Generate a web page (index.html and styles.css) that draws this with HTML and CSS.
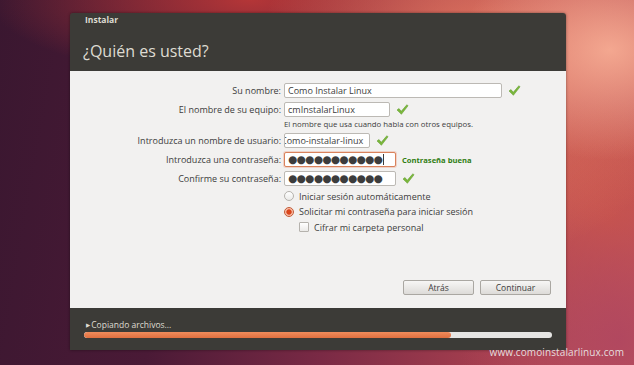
FILE: index.html
```html
<!DOCTYPE html>
<html lang="es">
<head>
    <meta charset="UTF-8" />
    <title>Instalar</title>
    <link rel="stylesheet" href="styles.css">
</head>
<body>
<div class="desktop">
    <div class="window">
        <div class="header">
            <div class="wtitle">Instalar</div>
            <h1>¿Quién es usted?</h1>
        </div>

        <div class="content">
            <div class="row">
                <label class="label">Su nombre:</label>
                <div class="field w-name">Como Instalar Linux</div>
                <svg class="ok" viewBox="0 0 14 12"><path d="M1 6.5 L3.2 5 L5.6 8 L11.8 0.8 L13 2 L5.8 11.2 Z" fill="#7cb83c" stroke="#5e9a2a" stroke-width="0.6"/></svg>
            </div>
            <div class="row tight">
                <label class="label">El nombre de su equipo:</label>
                <div class="field w-host">cmInstalarLinux</div>
                <svg class="ok" viewBox="0 0 14 12"><path d="M1 6.5 L3.2 5 L5.6 8 L11.8 0.8 L13 2 L5.8 11.2 Z" fill="#7cb83c" stroke="#5e9a2a" stroke-width="0.6"/></svg>
            </div>
            <div class="hint">El nombre que usa cuando habla con otros equipos.</div>
            <div class="row">
                <label class="label">Introduzca un nombre de usuario:</label>
                <div class="field w-user"><span class="scrolled">Como-instalar-linux</span></div>
                <svg class="ok" viewBox="0 0 14 12"><path d="M1 6.5 L3.2 5 L5.6 8 L11.8 0.8 L13 2 L5.8 11.2 Z" fill="#7cb83c" stroke="#5e9a2a" stroke-width="0.6"/></svg>
            </div>
            <div class="row">
                <label class="label">Introduzca una contraseña:</label>
                <div class="field w-pass focus"><span class="dots">●●●●●●●●●●●</span><span class="caret"></span></div>
                <span class="strength">Contraseña buena</span>
            </div>
            <div class="row">
                <label class="label">Confirme su contraseña:</label>
                <div class="field w-pass"><span class="dots">●●●●●●●●●●●</span></div>
                <svg class="ok" viewBox="0 0 14 12"><path d="M1 6.5 L3.2 5 L5.6 8 L11.8 0.8 L13 2 L5.8 11.2 Z" fill="#7cb83c" stroke="#5e9a2a" stroke-width="0.6"/></svg>
            </div>

            <div class="options">
                <div class="opt"><span class="radio"></span>Iniciar sesión automáticamente</div>
                <div class="opt"><span class="radio on"></span>Solicitar mi contraseña para iniciar sesión</div>
                <div class="opt sub"><span class="check"></span>Cifrar mi carpeta personal</div>
            </div>

            <div class="buttons">
                <button type="button">Atrás</button>
                <button type="button">Continuar</button>
            </div>
        </div>

        <div class="footer">
            <div class="status"><span class="arrow">▶</span>Copiando archivos...</div>
            <div class="progress"><div class="bar" style="width: 78.5%"></div></div>
        </div>
    </div>
    <div class="watermark">www.comoinstalarlinux.com</div>
</div>
</body>
</html>
```

FILE: styles.css
```css
body {
    margin: 0;
    font-family: 'Open Sans', 'DejaVu Sans', sans-serif;
}
.desktop {
    position: relative;
    width: 634px;
    height: 365px;
    overflow: hidden;
    box-sizing: border-box;
    padding: 13px 0 0 70px;
    background:
        radial-gradient(ellipse 150px 110px at 610px 50px, rgba(248,175,150,0.9), rgba(248,175,150,0) 100%),
        radial-gradient(ellipse 220px 200px at 480px 60px, rgba(240,130,100,0.9), rgba(240,130,100,0) 100%),
        radial-gradient(ellipse 160px 200px at 620px 340px, rgba(176,70,96,0.9), rgba(176,70,96,0) 100%),
        radial-gradient(ellipse 140px 120px at 610px 220px, rgba(210,90,70,0.95), rgba(210,90,70,0) 100%),
        radial-gradient(ellipse 260px 80px at 250px 0px, rgba(185,55,55,0.95), rgba(185,55,55,0) 100%),
        linear-gradient(100deg, #3a1730 0%, #4a1a36 30%, #7a2a45 55%, #a8404f 80%, #c25a5a 100%);
}
.window {
    width: 496px;
    height: 337px;
    display: flex;
    flex-direction: column;
    border-radius: 3px 3px 0 0;
    overflow: hidden;
    box-shadow: 0 0 3px rgba(0,0,0,0.45);
}
.header {
    background: #3c3b37;
    height: 58px;
    color: #dfdbd2;
    padding: 0 0 0 15px;
}
.wtitle {
    font-size: 8.5px;
    font-weight: bold;
    padding-top: 2px;
    line-height: 10px;
}
h1 {
    margin: 0;
    font-weight: normal;
    font-size: 16px;
    line-height: 20px;
    padding-top: 16px;
    margin-left: -2px;
}
.content {
    background: #f2f1f0;
    height: 237px;
    box-sizing: border-box;
    padding-top: 12px;
    display: flex;
    flex-direction: column;
    font-size: 9px;
    color: #3c3c3c;
}
.row {
    display: flex;
    align-items: center;
    height: 15px;
    margin-bottom: 4px;
}
.row.tight {
    margin-bottom: 2px;
}
.label {
    width: 211px;
    text-align: right;
    margin-right: 3px;
    white-space: nowrap;
}
.field {
    height: 15px;
    box-sizing: border-box;
    border: 1px solid #bcb9b4;
    border-radius: 2px;
    background: #fff;
    padding: 0 3px;
    line-height: 13px;
    white-space: nowrap;
    overflow: hidden;
    display: flex;
    align-items: center;
}
.w-name { width: 218px; }
.w-host { width: 106px; }
.w-user { width: 86px; padding: 0 2px; }
.w-pass { width: 112px; }
.focus {
    border-color: #d9825b;
    box-shadow: 0 0 0 1px rgba(233,120,80,0.25);
}
.scrolled {
    margin-left: -6px;
}
.dots {
    font-family: 'DejaVu Sans', sans-serif;
    font-size: 10.5px;
    letter-spacing: -0.6px;
    color: #3c3c3c;
}
.caret {
    display: inline-block;
    width: 1px;
    height: 11px;
    background: #3c3c3c;
    margin-left: 1px;
}
.ok {
    width: 13px;
    height: 11px;
    margin-left: 6px;
}
.strength {
    margin-left: 6px;
    color: #2f7d12;
    font-weight: bold;
    font-size: 7.6px;
}
.hint {
    font-size: 7.8px;
    line-height: 10px;
    margin: 0 0 4px 214px;
}
.options {
    padding: 0 0 0 214px;
}
.opt {
    display: flex;
    align-items: center;
    height: 12px;
    margin-bottom: 3.5px;
}
.opt.sub {
    padding-left: 15px;
}
.radio, .check {
    width: 10px;
    height: 10px;
    box-sizing: border-box;
    border: 1px solid #b5b2ad;
    background: linear-gradient(#fff, #ebeae8);
    margin-right: 5px;
    flex-shrink: 0;
}
.radio {
    border-radius: 50%;
}
.radio.on {
    border-color: #c25a35;
    background: radial-gradient(circle, #d9461c 0, #d9461c 2.3px, #f6b29a 3px, #fbe3d8 100%);
}
.check {
    border-radius: 1px;
}
.buttons {
    margin-top: auto;
    display: flex;
    justify-content: flex-end;
    gap: 6px;
    padding: 0 15px 13px 0;
}
button {
    width: 71px;
    height: 15px;
    padding: 0;
    border: 1px solid #aaa7a2;
    border-radius: 2px;
    background: linear-gradient(#f7f6f5, #dddbd8);
    font-family: 'Open Sans', 'DejaVu Sans', sans-serif;
    font-size: 8.5px;
    color: #3c3c3c;
}
.footer {
    flex: 1;
    background: #3c3b37;
    padding: 11px 14px 0 14px;
    color: #dfdbd2;
}
.status {
    font-size: 8.5px;
    line-height: 11px;
    padding-left: 2px;
}
.arrow {
    font-size: 5.5px;
    margin-right: 1px;
    vertical-align: 1px;
}
.progress {
    height: 6px;
    border-radius: 3px;
    background: #e6e5e3;
    overflow: hidden;
    margin-top: 1px;
}
.bar {
    height: 100%;
    border-radius: 3px;
    background: linear-gradient(#f08c5c, #e06f3f);
}
.watermark {
    position: absolute;
    right: 10px;
    bottom: 6px;
    font-size: 10px;
    color: #e6dede;
    letter-spacing: 0.1px;
}
```
